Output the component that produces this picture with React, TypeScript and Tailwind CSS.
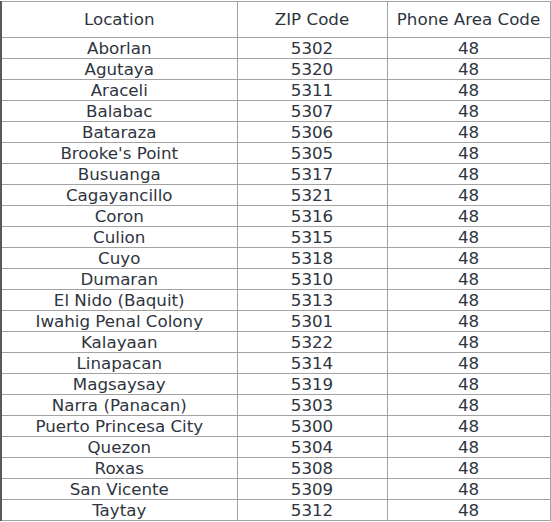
import React from 'react';

const rows: [string, string, string][] = [
  ['Aborlan', '5302', '48'],
  ['Agutaya', '5320', '48'],
  ['Araceli', '5311', '48'],
  ['Balabac', '5307', '48'],
  ['Bataraza', '5306', '48'],
  ["Brooke's Point", '5305', '48'],
  ['Busuanga', '5317', '48'],
  ['Cagayancillo', '5321', '48'],
  ['Coron', '5316', '48'],
  ['Culion', '5315', '48'],
  ['Cuyo', '5318', '48'],
  ['Dumaran', '5310', '48'],
  ['El Nido (Baquit)', '5313', '48'],
  ['Iwahig Penal Colony', '5301', '48'],
  ['Kalayaan', '5322', '48'],
  ['Linapacan', '5314', '48'],
  ['Magsaysay', '5319', '48'],
  ['Narra (Panacan)', '5303', '48'],
  ['Puerto Princesa City', '5300', '48'],
  ['Quezon', '5304', '48'],
  ['Roxas', '5308', '48'],
  ['San Vicente', '5309', '48'],
  ['Taytay', '5312', '48'],
];

const cell = 'border border-[#a3a3a3] p-0 text-center font-normal';

export default function App() {
  return (
    <div className="bg-white w-[551px] h-[522px] pt-px font-['DejaVu_Sans',Verdana,sans-serif] text-[16.7px] text-[#2e3540]">
      <div className="border-l-2 border-[#5a5a5a] w-[550px]">
        <table className="border-collapse w-[548px] table-fixed">
          <colgroup>
            <col className="w-[235px]" />
            <col className="w-[150px]" />
            <col className="w-[163px]" />
          </colgroup>
          <thead>
            <tr className="h-[36px]">
              <th className={`${cell} border-l-0`}>Location</th>
              <th className={cell}>ZIP Code</th>
              <th className={cell}>Phone Area Code</th>
            </tr>
          </thead>
          <tbody>
            {rows.map(([loc, zip, code]) => (
              <tr key={loc} className="h-[21px] leading-[20px]">
                <td className={`${cell} border-l-0`}>{loc}</td>
                <td className={cell}>{zip}</td>
                <td className={cell}>{code}</td>
              </tr>
            ))}
          </tbody>
        </table>
      </div>
    </div>
  );
}
